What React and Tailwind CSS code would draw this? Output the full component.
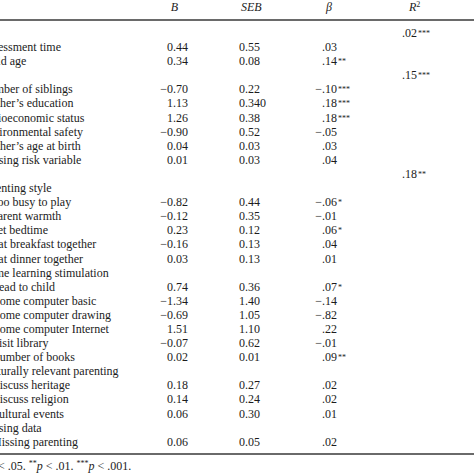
const rows = [
  { block: true, r2: ".02", r2Sig: "***" },
  { label: "Assessment time", indent: 1, b: "0.44", seb: "0.55", beta: ".03" },
  { label: "Child age", indent: 1, b: "0.34", seb: "0.08", beta: ".14", sig: "**" },
  { block: true, r2: ".15", r2Sig: "***" },
  { label: "Number of siblings", indent: 1, b: "−0.70", seb: "0.22", beta: ".10", neg: true, sig: "***" },
  { label: "Mother’s education", indent: 1, b: "1.13", seb: "0.340", beta: ".18", sig: "***" },
  { label: "Socioeconomic status", indent: 1, b: "1.26", seb: "0.38", beta: ".18", sig: "***" },
  { label: "Environmental safety", indent: 1, b: "−0.90", seb: "0.52", beta: ".05", neg: true },
  { label: "Mother’s age at birth", indent: 1, b: "0.04", seb: "0.03", beta: ".03" },
  { label: "Missing risk variable", indent: 1, b: "0.01", seb: "0.03", beta: ".04" },
  { block: true, r2: ".18", r2Sig: "**" },
  { label: "Parenting style", indent: 1 },
  { label: "Too busy to play", indent: 2, b: "−0.82", seb: "0.44", beta: ".06", neg: true, sig: "*" },
  { label: "Parent warmth", indent: 2, b: "−0.12", seb: "0.35", beta: ".01", neg: true },
  { label: "Set bedtime", indent: 2, b: "0.23", seb: "0.12", beta: ".06", sig: "*" },
  { label: "Eat breakfast together", indent: 2, b: "−0.16", seb: "0.13", beta: ".04" },
  { label: "Eat dinner together", indent: 2, b: "0.03", seb: "0.13", beta: ".01" },
  { label: "Home learning stimulation", indent: 1 },
  { label: "Read to child", indent: 2, b: "0.74", seb: "0.36", beta: ".07", sig: "*" },
  { label: "Home computer basic", indent: 2, b: "−1.34", seb: "1.40", beta: ".14", neg: true },
  { label: "Home computer drawing", indent: 2, b: "−0.69", seb: "1.05", beta: ".82", neg: true },
  { label: "Home computer Internet", indent: 2, b: "1.51", seb: "1.10", beta: ".22" },
  { label: "Visit library", indent: 2, b: "−0.07", seb: "0.62", beta: ".01", neg: true },
  { label: "Number of books", indent: 2, b: "0.02", seb: "0.01", beta: ".09", sig: "**" },
  { label: "Culturally relevant parenting", indent: 1 },
  { label: "Discuss heritage", indent: 2, b: "0.18", seb: "0.27", beta: ".02" },
  { label: "Discuss religion", indent: 2, b: "0.14", seb: "0.24", beta: ".02" },
  { label: "Cultural events", indent: 2, b: "0.06", seb: "0.30", beta: ".01" },
  { label: "Missing data", indent: 1 },
  { label: "Missing parenting", indent: 2, b: "0.06", seb: "0.05", beta: ".02" },
];

const Stars = ({ s }) =>
  s ? <sup className="text-[8px] relative -top-[1px] ml-[1px]">{s}</sup> : null;

const Row = ({ row }) => (
  <div className="flex h-[14.1px] leading-[14px] whitespace-nowrap">
    <div className={`w-[172px] ${row.indent === 2 ? "pl-[23px]" : "pl-[12px]"}`}>
      {row.label}
    </div>
    <div className="w-[48px] text-right">{row.b}</div>
    <div className="w-[74px] ml-[51px]">{row.seb}</div>
    <div className="w-[9px] text-right">{row.beta && row.neg ? "−" : ""}</div>
    <div className="w-[80px]">
      {row.beta}
      <Stars s={row.sig} />
    </div>
    <div>
      {row.r2}
      <Stars s={row.r2Sig} />
    </div>
  </div>
);

export default function App() {
  return (
    <div
      className="w-[474px] h-[474px] overflow-hidden bg-white text-[#1c1c1c] text-[12px]"
      style={{ fontFamily: '"Liberation Serif", "Times New Roman", serif' }}
    >
      <div className="w-[506px] -ml-[32px]">
        {/* header */}
        <div className="flex h-[19px] leading-[14px] italic">
          <div className="w-[172px]" />
          <div className="w-[48px] text-right pr-[10px]">B</div>
          <div className="w-[74px] ml-[51px] pl-[2px]">SEB</div>
          <div className="w-[89px] pl-[13px]">β</div>
          <div className="pl-[7px]">
            R<sup className="text-[8px] not-italic">2</sup>
          </div>
        </div>
        <div className="h-[2px] bg-[#6a6a6a]" />

        <div className="pt-[5px]">
          {rows.map((row, i) => (
            <Row key={i} row={row} />
          ))}
        </div>

        <div className="h-[2px] bg-[#6a6a6a] mt-[4px]" />
        <div className="mt-[4px] pl-[17px] leading-[14px] whitespace-nowrap">
          <sup className="text-[8px]">*</sup>
          <i>p</i> &lt; .05. <sup className="text-[8px]">**</sup>
          <i>p</i> &lt; .01. <sup className="text-[8px]">***</sup>
          <i>p</i> &lt; .001.
        </div>
      </div>
    </div>
  );
}
